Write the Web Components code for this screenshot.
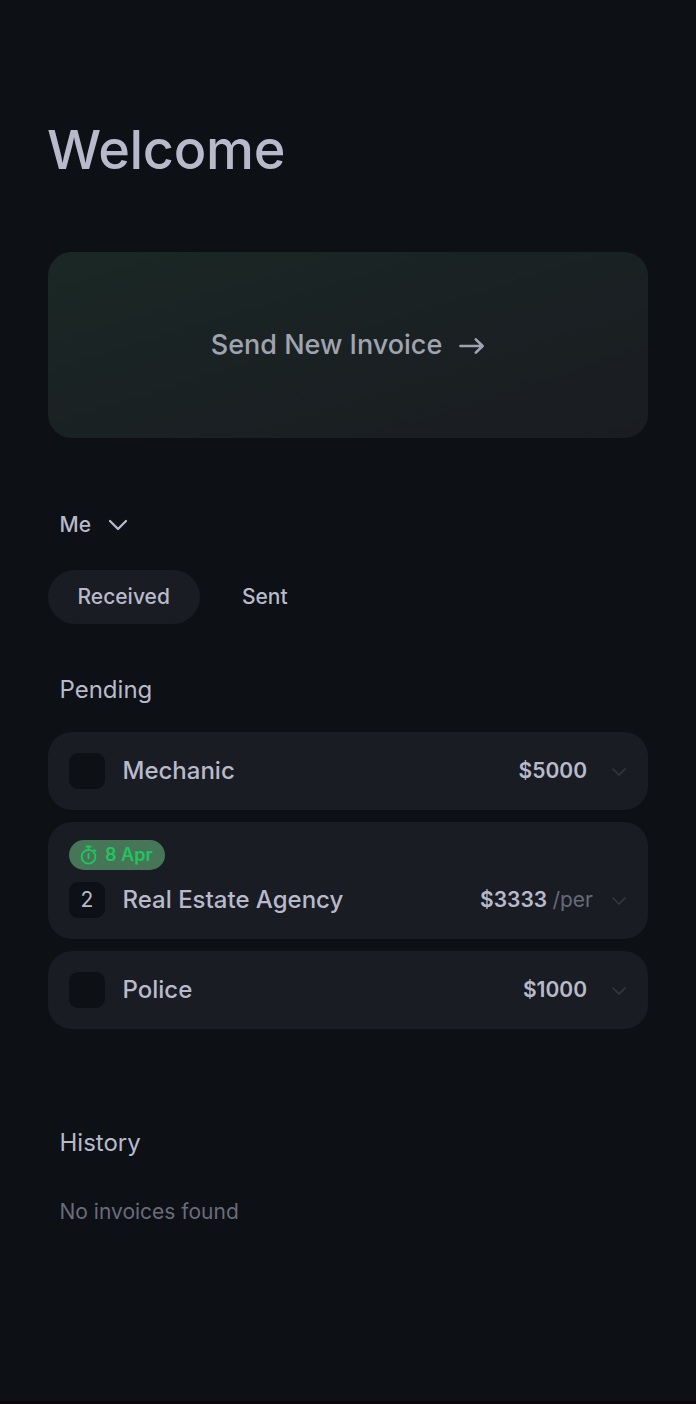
<!DOCTYPE html>
<html lang="en">
<head>
<meta charset="utf-8">
<title>Invoices</title>
<style>
  body {
    margin: 0;
    background: #0d1015;
    color: #b8bacb;
    font-family: Inter, "Liberation Sans", sans-serif;
  }
</style>
</head>
<body>
<invoice-app></invoice-app>

<script>
class ChevronIcon extends HTMLElement {
  constructor() {
    super();
    this.attachShadow({ mode: "open" });
  }

  static get styles() {
    return /* css */`
      :host {
        display: block;
        width: 24px;
        height: 24px;
      }

      svg {
        display: block;
        width: 100%;
        height: 100%;
      }
    `;
  }

  connectedCallback() {
    this.shadowRoot.innerHTML = /* html */`
    <style>${ChevronIcon.styles}</style>
    <svg viewBox="0 0 24 24" fill="none" stroke="currentColor" stroke-width="2.3" stroke-linecap="round" stroke-linejoin="round">
      <path d="M4 8l8 8 8-8"/>
    </svg>`;
  }
}

class InvoiceButton extends HTMLElement {
  constructor() {
    super();
    this.attachShadow({ mode: "open" });
  }

  static get styles() {
    return /* css */`
      :host {
        display: flex;
        justify-content: center;
        align-items: center;
        gap: 17px;
        height: 186px;
        border-radius: 24px;
        background: linear-gradient(to bottom right, #1a2825, #1a2123 50%, #1a1c21);
        color: #a0a4b0;
        font-size: 27px;
        font-weight: 500;
        line-height: 36px;
      }

      svg {
        display: block;
        width: 26px;
        height: 18px;
        margin-top: 2px;
      }
    `;
  }

  connectedCallback() {
    this.shadowRoot.innerHTML = /* html */`
    <style>${InvoiceButton.styles}</style>
    <span><slot></slot></span>
    <svg viewBox="0 0 26 18" fill="none" stroke="currentColor" stroke-width="2.7" stroke-linecap="round" stroke-linejoin="round">
      <path d="M1.5 9H23M16.8 2.4L23.6 9l-6.8 6.6"/>
    </svg>`;
  }
}

class InvoiceTab extends HTMLElement {
  constructor() {
    super();
    this.attachShadow({ mode: "open" });
  }

  static get styles() {
    return /* css */`
      :host {
        display: block;
        padding: 0 30.5px 0 29.5px;
        border-radius: 27px;
        font-size: 21px;
        font-weight: 500;
        line-height: 54px;
      }

      :host([active]) {
        background: #191c22;
      }
    `;
  }

  connectedCallback() {
    this.shadowRoot.innerHTML = /* html */`
    <style>${InvoiceTab.styles}</style>
    <slot></slot>`;
  }
}

class InvoiceDue extends HTMLElement {
  constructor() {
    super();
    this.attachShadow({ mode: "open" });
  }

  static get styles() {
    return /* css */`
      :host {
        display: flex;
        align-items: center;
        gap: 7px;
        height: 30px;
        padding: 0 12px 0 11px;
        border-radius: 15px;
        background: #467558;
        color: #22c55e;
        font-size: 18px;
        font-weight: 600;
        line-height: 30px;
      }

      svg {
        display: block;
        width: 18px;
        height: 20px;
      }
    `;
  }

  connectedCallback() {
    this.shadowRoot.innerHTML = /* html */`
    <style>${InvoiceDue.styles}</style>
    <svg viewBox="0 0 18 20" fill="none" stroke="currentColor" stroke-width="1.8" stroke-linecap="round">
      <circle cx="8.5" cy="11.7" r="6.9"/>
      <path d="M6.3 1.5h4.4M8.5 1.5v3M14.2 4.8l1.4 1.4M8.5 8.7v4.6"/>
    </svg>
    <slot></slot>`;
  }
}

class InvoiceCard extends HTMLElement {
  constructor() {
    super();
    this.attachShadow({ mode: "open" });
  }

  static get styles() {
    return /* css */`
      :host {
        display: flex;
        flex-direction: column;
        align-items: flex-start;
        padding: 21px 20px 21px 21px;
        border-radius: 24px;
        background: #191c22;
      }

      :host([due]) {
        padding-top: 18px;
      }

      invoice-due {
        margin-bottom: 12px;
      }

      .row {
        display: flex;
        align-items: center;
        align-self: stretch;
        height: 36px;
        line-height: 36px;
      }

      .count {
        width: 36px;
        height: 36px;
        border-radius: 9px;
        background: #0d1015;
        font-size: 21px;
        line-height: 35px;
        text-align: center;
      }

      .name {
        flex: 1;
        margin-left: 17.5px;
        padding-bottom: 1px;
        font-size: 24px;
        font-weight: 500;
        line-height: 35px;
      }

      .price {
        font-size: 21px;
        font-weight: 600;
        line-height: 35px;
        padding-bottom: 1px;
      }

      .per {
        color: #666a78;
        font-weight: 400;
      }

      chevron-icon {
        width: 18px;
        height: 18px;
        margin: 1px 0 0 23px;
        color: #343740;
      }

      :host([per]) chevron-icon {
        margin-left: 17px;
      }
    `;
  }

  connectedCallback() {
    const due = this.getAttribute("due");
    const per = this.hasAttribute("per") ? ` <span class="per">/per</span>` : "";

    this.shadowRoot.innerHTML = /* html */`
    <style>${InvoiceCard.styles}</style>
    ${due ? `<invoice-due>${due}</invoice-due>` : ""}
    <div class="row">
      <div class="count">${this.getAttribute("count") || ""}</div>
      <div class="name"><slot></slot></div>
      <div class="price">$${this.getAttribute("amount")}${per}</div>
      <chevron-icon></chevron-icon>
    </div>`;
  }
}

class InvoiceApp extends HTMLElement {
  constructor() {
    super();
    this.attachShadow({ mode: "open" });
  }

  static get styles() {
    return /* css */`
      :host {
        display: flex;
        flex-direction: column;
        box-sizing: border-box;
        height: 1404px;
        padding: 117px 48px 0;
        border-bottom: 3px solid #0c040a;
      }

      h1,
      h2,
      p {
        margin: 0;
        font-weight: 400;
      }

      h1 {
        margin: 0 0 69px -1px;
        font-size: 54px;
        font-weight: 500;
        line-height: 66px;
        letter-spacing: -0.3px;
      }

      .account {
        display: flex;
        align-items: center;
        gap: 15px;
        margin: 69px 11.5px 28px;
        font-size: 21px;
        font-weight: 500;
        line-height: 35px;
      }

      .tabs {
        display: flex;
        gap: 12px;
      }

      h2 {
        margin: 48px 11.5px 24px;
        font-size: 24px;
        line-height: 36px;
      }

      .list {
        display: flex;
        flex-direction: column;
        gap: 12px;
      }

      .list + h2 {
        margin-top: 96px;
        margin-bottom: 33px;
      }

      p {
        margin: 0 11.5px;
        color: #6a6c7b;
        font-size: 21px;
        line-height: 36px;
      }
    `;
  }

  connectedCallback() {
    this.shadowRoot.innerHTML = /* html */`
    <style>${InvoiceApp.styles}</style>
    <h1>Welcome</h1>
    <invoice-button>Send New Invoice</invoice-button>
    <div class="account">Me <chevron-icon></chevron-icon></div>
    <div class="tabs">
      <invoice-tab active>Received</invoice-tab>
      <invoice-tab>Sent</invoice-tab>
    </div>
    <h2>Pending</h2>
    <div class="list">
      <invoice-card amount="5000">Mechanic</invoice-card>
      <invoice-card amount="3333" due="8 Apr" count="2" per>Real Estate Agency</invoice-card>
      <invoice-card amount="1000">Police</invoice-card>
    </div>
    <h2>History</h2>
    <p>No invoices found</p>`;
  }
}

customElements.define("chevron-icon", ChevronIcon);
customElements.define("invoice-button", InvoiceButton);
customElements.define("invoice-tab", InvoiceTab);
customElements.define("invoice-due", InvoiceDue);
customElements.define("invoice-card", InvoiceCard);
customElements.define("invoice-app", InvoiceApp);
</script>
</body>
</html>
